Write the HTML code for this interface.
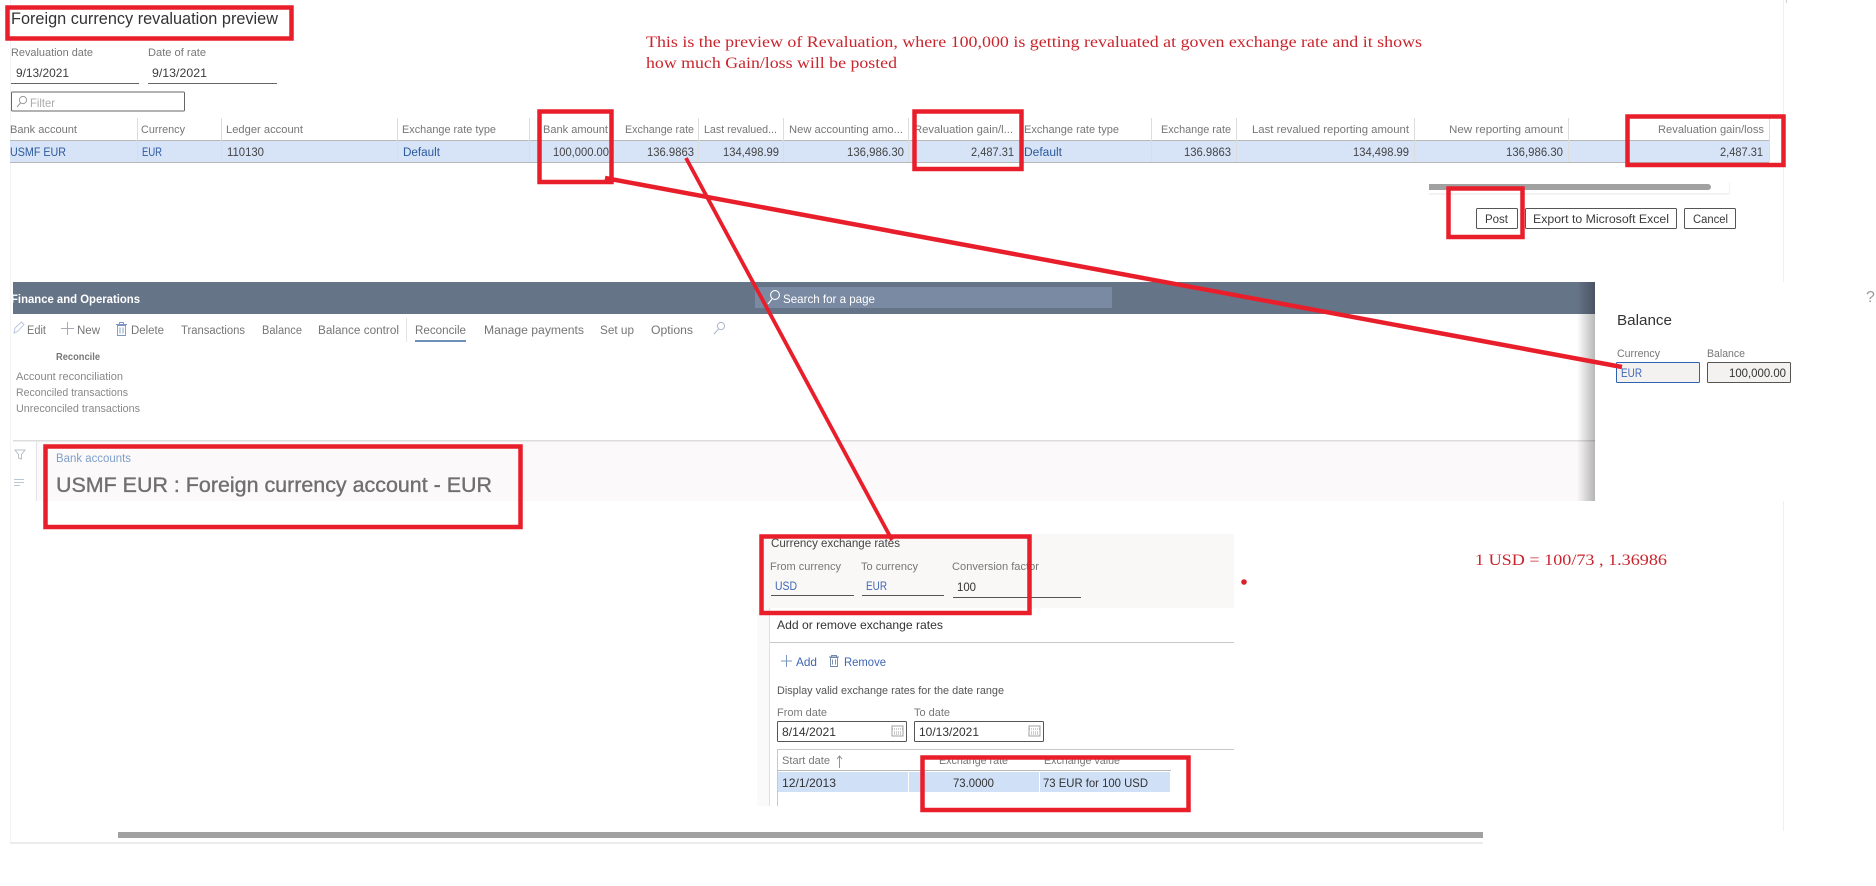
<!DOCTYPE html>
<html lang="en">
<head>
<meta charset="utf-8">
<title>Foreign currency revaluation preview</title>
<style>
html,body{margin:0;padding:0;background:#fff;width:1876px;height:886px;overflow:hidden}
svg{display:block}
text{font-family:"Liberation Sans",sans-serif;white-space:pre}
.h{font-size:11px;fill:#767676}
.v{font-size:11.5px;fill:#444}
.l{font-size:11.5px;fill:#2b5a9c}
.t{font-size:11.5px;fill:#757575}
.s{font-size:11px;fill:#777}
.d{font-size:12px;fill:#3d3d3d}
.b{font-size:11.5px;fill:#3a3a3a}
.a{font-family:"Liberation Serif",serif;font-size:16px;fill:#c9252d}
.r{fill:none;stroke:#e81f2b;stroke-width:4.5}
</style>
</head>
<body>
<svg width="1876" height="886" viewBox="0 0 1876 886" xmlns="http://www.w3.org/2000/svg">
<defs>
<linearGradient id="sh" x1="0" x2="1" y1="0" y2="0">
<stop offset="0" stop-color="#000" stop-opacity="0"/>
<stop offset="1" stop-color="#000" stop-opacity=".28"/>
</linearGradient>
</defs>
<rect width="1876" height="886" fill="#fff"/>

<!-- faint page edges -->
<rect x="1783" y="0" width="1" height="282" fill="#f0f0f0"/>
<rect x="1783" y="501" width="1" height="330" fill="#f0f0f0"/>
<rect x="1786" y="0" width="1" height="3" fill="#cccccc"/>
<rect x="10" y="0" width="1" height="842" fill="#f3f3f3"/>
<rect x="10" y="842" width="1473" height="2" fill="#ececec"/>

<!-- top header -->
<text x="11" y="24" style="font-size:16.5px;fill:#333" textLength="267" lengthAdjust="spacingAndGlyphs">Foreign currency revaluation preview</text>
<text x="11" y="56" class="s" textLength="82" lengthAdjust="spacingAndGlyphs">Revaluation date</text>
<text x="148" y="56" class="s" textLength="58" lengthAdjust="spacingAndGlyphs">Date of rate</text>
<text x="16" y="77" class="d" textLength="53" lengthAdjust="spacingAndGlyphs">9/13/2021</text>
<text x="152" y="77" class="d" textLength="55" lengthAdjust="spacingAndGlyphs">9/13/2021</text>
<rect x="11" y="83" width="128" height="1" fill="#666"/>
<rect x="148" y="83" width="129" height="1" fill="#666"/>
<rect x="11.5" y="92" width="173" height="19" rx="1" fill="#fff" stroke="#666"/>
<circle cx="23" cy="100" r="3.6" fill="none" stroke="#999"/>
<path d="M20.500 103L17 107" stroke="#999" fill="none"/>
<text x="30" y="107" style="font-size:12px;fill:#aaa" textLength="25" lengthAdjust="spacingAndGlyphs">Filter</text>

<!-- annotation -->
<text x="646" y="47" class="a" textLength="776" lengthAdjust="spacingAndGlyphs">This is the preview of Revaluation, where 100,000 is getting revaluated at goven exchange rate and it shows</text>
<text x="646" y="68" class="a" textLength="251" lengthAdjust="spacingAndGlyphs">how much Gain/loss will be posted</text>

<!-- grid -->
<rect x="10" y="141" width="1759" height="21" fill="#d7e3f7"/>
<rect x="10" y="140" width="1759" height="1" fill="#b8b8b8"/>
<rect x="10" y="162" width="1759" height="1" fill="#b8b8b8"/>
<g fill="#dcdcdc">
<rect x="137" y="118" width="1" height="44"/><rect x="221" y="118" width="1" height="44"/>
<rect x="397" y="118" width="1" height="44"/><rect x="529" y="118" width="1" height="44"/>
<rect x="610" y="118" width="1" height="44"/><rect x="698" y="118" width="1" height="44"/>
<rect x="783" y="118" width="1" height="44"/><rect x="908" y="118" width="1" height="44"/>
<rect x="1021" y="118" width="1" height="44"/><rect x="1151" y="118" width="1" height="44"/>
<rect x="1236" y="118" width="1" height="44"/><rect x="1414" y="118" width="1" height="44"/>
<rect x="1568" y="118" width="1" height="44"/><rect x="1769" y="118" width="1" height="44"/>
</g>
<text x="10" y="133" class="h" textLength="67" lengthAdjust="spacingAndGlyphs">Bank account</text>
<text x="141" y="133" class="h" textLength="44" lengthAdjust="spacingAndGlyphs">Currency</text>
<text x="226" y="133" class="h" textLength="77" lengthAdjust="spacingAndGlyphs">Ledger account</text>
<text x="402" y="133" class="h" textLength="94" lengthAdjust="spacingAndGlyphs">Exchange rate type</text>
<text x="543" y="133" class="h" textLength="65" lengthAdjust="spacingAndGlyphs">Bank amount</text>
<text x="625" y="133" class="h" textLength="69" lengthAdjust="spacingAndGlyphs">Exchange rate</text>
<text x="704" y="133" class="h" textLength="73" lengthAdjust="spacingAndGlyphs">Last revalued...</text>
<text x="789" y="133" class="h" textLength="114" lengthAdjust="spacingAndGlyphs">New accounting amo...</text>
<text x="914" y="133" class="h" textLength="99" lengthAdjust="spacingAndGlyphs">Revaluation gain/l...</text>
<text x="1024" y="133" class="h" textLength="95" lengthAdjust="spacingAndGlyphs">Exchange rate type</text>
<text x="1161" y="133" class="h" textLength="70" lengthAdjust="spacingAndGlyphs">Exchange rate</text>
<text x="1252" y="133" class="h" textLength="157" lengthAdjust="spacingAndGlyphs">Last revalued reporting amount</text>
<text x="1449" y="133" class="h" textLength="114" lengthAdjust="spacingAndGlyphs">New reporting amount</text>
<text x="1658" y="133" class="h" textLength="106" lengthAdjust="spacingAndGlyphs">Revaluation gain/loss</text>

<text x="10" y="156" class="l" textLength="56" lengthAdjust="spacingAndGlyphs">USMF EUR</text>
<text x="142" y="156" class="l" textLength="20" lengthAdjust="spacingAndGlyphs">EUR</text>
<text x="227" y="156" class="v" textLength="37" lengthAdjust="spacingAndGlyphs">110130</text>
<text x="403" y="156" class="l" textLength="37" lengthAdjust="spacingAndGlyphs">Default</text>
<text x="553" y="156" class="v" textLength="56" lengthAdjust="spacingAndGlyphs">100,000.00</text>
<text x="647" y="156" class="v" textLength="47" lengthAdjust="spacingAndGlyphs">136.9863</text>
<text x="723" y="156" class="v" textLength="56" lengthAdjust="spacingAndGlyphs">134,498.99</text>
<text x="847" y="156" class="v" textLength="57" lengthAdjust="spacingAndGlyphs">136,986.30</text>
<text x="971" y="156" class="v" textLength="43" lengthAdjust="spacingAndGlyphs">2,487.31</text>
<text x="1024" y="156" class="l" textLength="38" lengthAdjust="spacingAndGlyphs">Default</text>
<text x="1184" y="156" class="v" textLength="47" lengthAdjust="spacingAndGlyphs">136.9863</text>
<text x="1353" y="156" class="v" textLength="56" lengthAdjust="spacingAndGlyphs">134,498.99</text>
<text x="1506" y="156" class="v" textLength="57" lengthAdjust="spacingAndGlyphs">136,986.30</text>
<text x="1720" y="156" class="v" textLength="43" lengthAdjust="spacingAndGlyphs">2,487.31</text>

<!-- upper scrollbar and buttons -->
<rect x="1429" y="193" width="300" height="2" fill="#f2f2f2"/>
<rect x="1729" y="182" width="1" height="12" fill="#f2f2f2"/>
<path d="M1429 184H1708a3 3 0 0 1 0 6H1429Z" fill="#a1a1a1"/>
<rect x="1476.500" y="208.500" width="41" height="20" rx="1" fill="#fff" stroke="#555"/>
<rect x="1525.500" y="208.500" width="151" height="20" rx="1" fill="#fff" stroke="#555"/>
<rect x="1684.500" y="208.500" width="51" height="20" rx="1" fill="#fff" stroke="#555"/>
<text x="1485" y="223" class="b" textLength="23" lengthAdjust="spacingAndGlyphs">Post</text>
<text x="1533" y="223" class="b" textLength="136" lengthAdjust="spacingAndGlyphs">Export to Microsoft Excel</text>
<text x="1693" y="223" class="b" textLength="35" lengthAdjust="spacingAndGlyphs">Cancel</text>

<!-- F&O navbar -->
<rect x="13" y="282" width="1582" height="32" fill="#667488"/>
<text x="11" y="303" style="font-size:12px;font-weight:bold;fill:#fff" textLength="129" lengthAdjust="spacingAndGlyphs">Finance and Operations</text>
<rect x="755" y="287" width="357" height="21" fill="#7a8aa3"/>
<circle cx="775" cy="295" r="4.400" fill="none" stroke="#fff" stroke-width="1.100"/>
<path d="M772 299L768 304" stroke="#fff" stroke-width="1.100" fill="none"/>
<text x="783" y="303" style="font-size:12px;fill:#fff" textLength="92" lengthAdjust="spacingAndGlyphs">Search for a page</text>

<!-- toolbar -->
<path d="M14 333L15 328L21.500 322L24 324.500L17.500 331.500Z" fill="none" stroke="#b5c3de" stroke-width=".9"/>
<text x="27" y="334" class="t" textLength="19" lengthAdjust="spacingAndGlyphs">Edit</text>
<path d="M67.500 322V335M61 328.500H74" stroke="#a9a9b5" stroke-width="1" fill="none"/>
<text x="77" y="334" class="t" textLength="23" lengthAdjust="spacingAndGlyphs">New</text>
<path d="M117.500 325.500H125.500V335.500H117.500ZM116 324.500H127M119.500 324V322.500H123.500V324M120 327.500V333.500M123 327.500V333.500" stroke="#7b97c0" stroke-width=".9" fill="none"/>
<text x="131" y="334" class="t" textLength="33" lengthAdjust="spacingAndGlyphs">Delete</text>
<text x="181" y="334" class="t" textLength="64" lengthAdjust="spacingAndGlyphs">Transactions</text>
<text x="262" y="334" class="t" textLength="40" lengthAdjust="spacingAndGlyphs">Balance</text>
<text x="318" y="334" class="t" textLength="81" lengthAdjust="spacingAndGlyphs">Balance control</text>
<rect x="406" y="318" width="1" height="24" fill="#e4e4e4"/>
<text x="415" y="334" class="t" textLength="51" lengthAdjust="spacingAndGlyphs">Reconcile</text>
<rect x="415" y="340" width="51" height="2" fill="#6d8fb8"/>
<text x="484" y="334" class="t" textLength="100" lengthAdjust="spacingAndGlyphs">Manage payments</text>
<text x="600" y="334" class="t" textLength="34" lengthAdjust="spacingAndGlyphs">Set up</text>
<text x="651" y="334" class="t" textLength="42" lengthAdjust="spacingAndGlyphs">Options</text>
<circle cx="721" cy="326" r="3.600" fill="none" stroke="#a8b6cb"/>
<path d="M718.500 329L714 334" stroke="#a8b6cb" fill="none"/>

<text x="56" y="360" style="font-size:10.500px;font-weight:bold;fill:#777" textLength="44" lengthAdjust="spacingAndGlyphs">Reconcile</text>
<text x="16" y="380" style="font-size:11px;fill:#888" textLength="107" lengthAdjust="spacingAndGlyphs">Account reconciliation</text>
<text x="16" y="396" style="font-size:11px;fill:#888" textLength="112" lengthAdjust="spacingAndGlyphs">Reconciled transactions</text>
<text x="16" y="412" style="font-size:11px;fill:#888" textLength="124" lengthAdjust="spacingAndGlyphs">Unreconciled transactions</text>

<!-- Record header -->
<rect x="13" y="441" width="1582" height="60" fill="#fbf9fa"/>
<rect x="13" y="441" width="23" height="60" fill="#fff"/>
<rect x="13" y="440" width="1582" height="1.500" fill="#dcdcdc"/>
<rect x="36" y="441" width="1" height="60" fill="#e4e4e4"/>
<path d="M15 450H25L21.500 454.500V459L18.500 458V454.500Z" fill="none" stroke="#b8c0c8"/>
<path d="M14 479.500H24M14 482.500H24M14 485.500H20" stroke="#b8c6d6" fill="none"/>
<text x="56" y="462" style="font-size:11.500px;fill:#7e9fc8" textLength="75" lengthAdjust="spacingAndGlyphs">Bank accounts</text>
<text x="56" y="492" style="font-size:21px;fill:#6f6f6f;stroke:#6f6f6f;stroke-width:.35" textLength="436" lengthAdjust="spacingAndGlyphs">USMF EUR : Foreign currency account - EUR</text>

<!-- Balance panel -->
<rect x="1577" y="282" width="18" height="219" fill="url(#sh)"/>
<text x="1617" y="325" style="font-size:15px;fill:#333" textLength="55" lengthAdjust="spacingAndGlyphs">Balance</text>
<text x="1617" y="357" class="s" textLength="43" lengthAdjust="spacingAndGlyphs">Currency</text>
<text x="1707" y="357" class="s" textLength="38" lengthAdjust="spacingAndGlyphs">Balance</text>
<rect x="1616.500" y="362.500" width="83" height="20" rx="1" fill="#f3f2f1" stroke="#2f62b0"/>
<rect x="1707.500" y="362.500" width="83" height="20" rx="1" fill="#f3f2f1" stroke="#555"/>
<text x="1621" y="377" style="font-size:12px;fill:#3f66b5" textLength="21" lengthAdjust="spacingAndGlyphs">EUR</text>
<text x="1729" y="377" style="font-size:12px;fill:#333" textLength="57" lengthAdjust="spacingAndGlyphs">100,000.00</text>
<text x="1866" y="302" style="font-size:16px;fill:#999">?</text>

<!-- currency exchange dialog -->
<rect x="763" y="534" width="471" height="74" fill="#f9f8f7"/>
<rect x="757" y="608" width="13" height="198" fill="#fafafa"/>
<rect x="769" y="608" width="1" height="198" fill="#e0e0e0"/>
<text x="771" y="547" style="font-size:12px;fill:#444" textLength="129" lengthAdjust="spacingAndGlyphs">Currency exchange rates</text>
<text x="770" y="570" class="s" textLength="71" lengthAdjust="spacingAndGlyphs">From currency</text>
<text x="861" y="570" class="s" textLength="57" lengthAdjust="spacingAndGlyphs">To currency</text>
<text x="952" y="570" class="s" textLength="87" lengthAdjust="spacingAndGlyphs">Conversion factor</text>
<text x="775" y="590" style="font-size:12px;fill:#3f66b5" textLength="22" lengthAdjust="spacingAndGlyphs">USD</text>
<text x="866" y="590" style="font-size:12px;fill:#3f66b5" textLength="21" lengthAdjust="spacingAndGlyphs">EUR</text>
<text x="957" y="591" style="font-size:12px;fill:#333" textLength="19" lengthAdjust="spacingAndGlyphs">100</text>
<rect x="771" y="595" width="83" height="1" fill="#555"/>
<rect x="862" y="595" width="82" height="1" fill="#555"/>
<rect x="953" y="597" width="128" height="1" fill="#555"/>
<text x="777" y="629" style="font-size:12px;fill:#333" textLength="166" lengthAdjust="spacingAndGlyphs">Add or remove exchange rates</text>
<rect x="770" y="642" width="464" height="1" fill="#c8c8c8"/>
<path d="M786.500 655V667M781 661H792" stroke="#7b97c0" fill="none"/>
<text x="796" y="666" style="font-size:12px;fill:#3f66b5" textLength="21" lengthAdjust="spacingAndGlyphs">Add</text>
<path d="M830.500 657.500H837.500V666.500H830.500ZM829 657H839M831.500 656.500V655.500H836.500V656.500M832.500 659.500V664.500M835.500 659.500V664.500" stroke="#6f84a8" stroke-width=".9" fill="none"/>
<text x="844" y="666" style="font-size:12px;fill:#3f66b5" textLength="42" lengthAdjust="spacingAndGlyphs">Remove</text>
<text x="777" y="694" class="s" textLength="227" lengthAdjust="spacingAndGlyphs" style="fill:#555">Display valid exchange rates for the date range</text>
<text x="777" y="716" class="s" textLength="50" lengthAdjust="spacingAndGlyphs">From date</text>
<text x="914" y="716" class="s" textLength="36" lengthAdjust="spacingAndGlyphs">To date</text>
<rect x="777.500" y="721.500" width="129" height="20" rx="1" fill="#fff" stroke="#555"/>
<rect x="914.500" y="721.500" width="129" height="20" rx="1" fill="#fff" stroke="#555"/>
<text x="782" y="736" style="font-size:12px;fill:#333" textLength="54" lengthAdjust="spacingAndGlyphs">8/14/2021</text>
<text x="919" y="736" style="font-size:12px;fill:#333" textLength="60" lengthAdjust="spacingAndGlyphs">10/13/2021</text>
<g fill="none" stroke="#999" stroke-width=".9">
<rect x="892" y="726" width="11" height="10"/><path d="M892 729H903M894 732H901M894 734H901" stroke-dasharray="1 1"/>
<rect x="1029" y="726" width="11" height="10"/><path d="M1029 729H1040M1031 732H1038M1031 734H1038" stroke-dasharray="1 1"/>
</g>
<rect x="777" y="749" width="457" height="1" fill="#c8c8c8"/>
<rect x="777" y="749" width="1" height="57" fill="#c8c8c8"/>
<text x="782" y="764" class="s" textLength="48" lengthAdjust="spacingAndGlyphs">Start date</text>
<path d="M839.500 756V768M837 759L839.500 756L842 759" fill="none" stroke="#888" stroke-width=".9"/>
<text x="939" y="764" class="s" textLength="69" lengthAdjust="spacingAndGlyphs">Exchange rate</text>
<text x="1044" y="764" class="s" textLength="76" lengthAdjust="spacingAndGlyphs">Exchange value</text>
<rect x="777" y="770" width="394" height="1" fill="#b8b8b8"/>
<rect x="778" y="772" width="392" height="20" fill="#cfe0f7"/>
<rect x="908" y="772" width="1" height="20" fill="#fff"/>
<rect x="1039" y="772" width="1" height="20" fill="#fff"/>
<text x="782" y="787" style="font-size:12px;fill:#333" textLength="54" lengthAdjust="spacingAndGlyphs">12/1/2013</text>
<text x="953" y="787" style="font-size:12px;fill:#333" textLength="41" lengthAdjust="spacingAndGlyphs">73.0000</text>
<text x="1043" y="787" style="font-size:12px;fill:#333" textLength="105" lengthAdjust="spacingAndGlyphs">73 EUR for 100 USD</text>

<circle cx="1244" cy="582" r="2.800" fill="#d8212c"/>
<text x="1475" y="565" class="a" style="font-size:15.500px" textLength="192" lengthAdjust="spacingAndGlyphs">1 USD = 100/73 , 1.36986</text>

<!-- bottom scrollbar -->
<rect x="118" y="832" width="1365" height="6" fill="#a1a1a1"/>

<!-- red call-out boxes -->
<rect class="r" x="7.500" y="7.500" width="284" height="31"/>
<rect class="r" x="539.500" y="111.500" width="72" height="70.500"/>
<rect class="r" x="914.500" y="111.500" width="107" height="57.500"/>
<rect class="r" x="1627.500" y="116.500" width="156" height="48.500"/>
<rect class="r" x="1448.500" y="188.500" width="74" height="48.500"/>
<rect class="r" x="45.500" y="446.500" width="475" height="80.500"/>
<rect class="r" x="761.500" y="536.500" width="268" height="76.500"/>
<rect class="r" x="922.500" y="757.500" width="266" height="52.500"/>

<!-- red connector lines -->
<path d="M605 178L1622 367" stroke="#e81f2b" stroke-width="4.500" fill="none"/>
<path d="M686 158L892 540" stroke="#e81f2b" stroke-width="3.800" fill="none"/>
</svg>
</body>
</html>
